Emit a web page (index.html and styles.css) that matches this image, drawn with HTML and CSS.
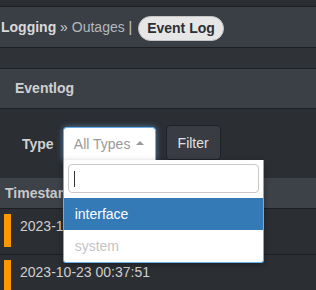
FILE: index.html
```html
<!DOCTYPE html>
<html>
<head>
    <meta charset="UTF-8">
    <title>Event Log</title>
    <link rel="stylesheet" href="styles.css">
</head>
<body>
    <div class="topbar"></div>

    <!-- Breadcrumb -->
    <div class="breadcrumb">
        <span class="crumb-strong">Logging</span> &raquo; <span class="crumb-link">Outages</span> | <span class="crumb-active">Event Log</span>
    </div>
    <div class="subbar"></div>

    <div class="panel">
        <div class="panel-heading">Eventlog</div>
        <div class="panel-body">
            <div class="filter-row">
                <label class="filter-label">Type</label>
                <div class="select-wrap">
                    <div class="select-box">
                        <span>All Types</span>
                        <span class="caret"></span>
                    </div>
                    <div class="dropdown">
                        <div class="dropdown-search">
                            <div class="search-input"><span class="cursor"></span></div>
                        </div>
                        <div class="dropdown-option active">interface</div>
                        <div class="dropdown-option disabled">system</div>
                    </div>
                </div>
                <button class="filter-btn">Filter</button>
            </div>

            <div class="table">
                <div class="table-head">Timestamp</div>
                <div class="table-row">
                    <span class="severity"></span>
                    <span class="cell">2023-10-23 00:41:12</span>
                </div>
                <div class="table-row">
                    <span class="severity"></span>
                    <span class="cell">2023-10-23 00:37:51</span>
                </div>
            </div>
        </div>
    </div>
</body>
</html>
```

FILE: styles.css
```css
body {
    font-family: "Liberation Sans", Arial, sans-serif;
    font-size: 14px;
    margin: 0;
    padding: 0;
    background-color: #2b2e33;
    color: #d6d6d6;
    overflow: hidden;
}

.topbar {
    height: 6px;
    background-color: #2a2d31;
    border-bottom: 1px solid #1d1f22;
}

/* Breadcrumb */
.breadcrumb {
    height: 40px;
    line-height: 40px;
    background-color: #3a3f46;
    border-bottom: 1px solid #1d1f22;
    padding-left: 1px;
    color: #c8c8c8;
    white-space: nowrap;
}

.crumb-strong {
    font-weight: bold;
    color: #d9d9d9;
}

.crumb-link {
    color: #b4b8bd;
}

.crumb-active {
    display: inline-block;
    line-height: 23px;
    background-color: #e6e6e6;
    color: #2b2e33;
    font-weight: bold;
    padding: 0 8px;
    border-radius: 13px;
    border: 1px solid #c4c4c4;
    margin-left: 2px;
    vertical-align: middle;
}

.subbar {
    height: 20px;
    background-color: #2f3338;
    border-bottom: 1px solid #1d1f22;
}

/* Panel */
.panel-heading {
    height: 39px;
    line-height: 39px;
    background-color: #3b4047;
    border-bottom: 1px solid #1d1f22;
    padding-left: 15px;
    font-weight: bold;
    color: #d0d0d0;
}

.filter-row {
    display: flex;
    align-items: flex-end;
    padding: 16px 0 0 22px;
    height: 35px;
}

.filter-label {
    font-weight: bold;
    color: #d0d0d0;
    align-self: center;
    margin-top: 2px;
    margin-right: 9px;
}

.select-wrap {
    position: relative;
}

.select-box {
    width: 91px;
    height: 32px;
    background-color: #ffffff;
    border: 1px solid #66afe9;
    border-bottom: none;
    border-radius: 4px 4px 0 0;
    box-shadow: 0 0 6px rgba(102, 175, 233, 0.6);
    display: flex;
    align-items: center;
    justify-content: center;
    gap: 6px;
    color: #999999;
}

.caret {
    width: 0;
    height: 0;
    border-left: 4px solid transparent;
    border-right: 4px solid transparent;
    border-bottom: 4px solid #999999;
    margin-top: -2px;
}

.dropdown {
    position: absolute;
    top: 100%;
    left: 0;
    width: 199px;
    background-color: #ffffff;
    border: 1px solid #66afe9;
    border-top: none;
    border-radius: 0 0 3px 3px;
    box-shadow: 0 2px 6px rgba(0, 0, 0, 0.3);
    z-index: 10;
}

.dropdown-search {
    padding: 4px 4px 5px 4px;
}

.search-input {
    height: 27px;
    border: 1px solid #c8c8c8;
    border-radius: 4px;
    display: flex;
    align-items: center;
    padding-left: 5px;
}

.cursor {
    width: 1px;
    height: 16px;
    background-color: #333333;
}

.dropdown-option {
    height: 32px;
    line-height: 32px;
    padding-left: 11px;
    color: #333333;
}

.dropdown-option.active {
    background-color: #337ab7;
    color: #ffffff;
}

.dropdown-option.disabled {
    color: #c4c4c4;
}

.filter-btn {
    height: 35px;
    width: 55px;
    margin-left: 10px;
    background-color: #393d43;
    border: 1px solid #1f2124;
    border-radius: 4px;
    color: #e0e0e0;
    font-family: inherit;
    font-size: 14px;
}

/* Table */
.table {
    margin-top: 18px;
}

.table-head {
    height: 30px;
    line-height: 30px;
    background-color: #3d4249;
    border-bottom: 1px solid #1d1f22;
    padding-left: 5px;
    font-weight: bold;
    color: #c8c8c8;
}

.table-row {
    height: 40px;
    border-bottom: 1px solid #1d1f22;
    display: flex;
    align-items: flex-start;
    gap: 9px;
    padding: 5px 0 0 4px;
    color: #d0d0d0;
}

.cell {
    margin-top: 4px;
}

.severity {
    width: 7px;
    height: 33px;
    background-color: #ff9800;
}
```
